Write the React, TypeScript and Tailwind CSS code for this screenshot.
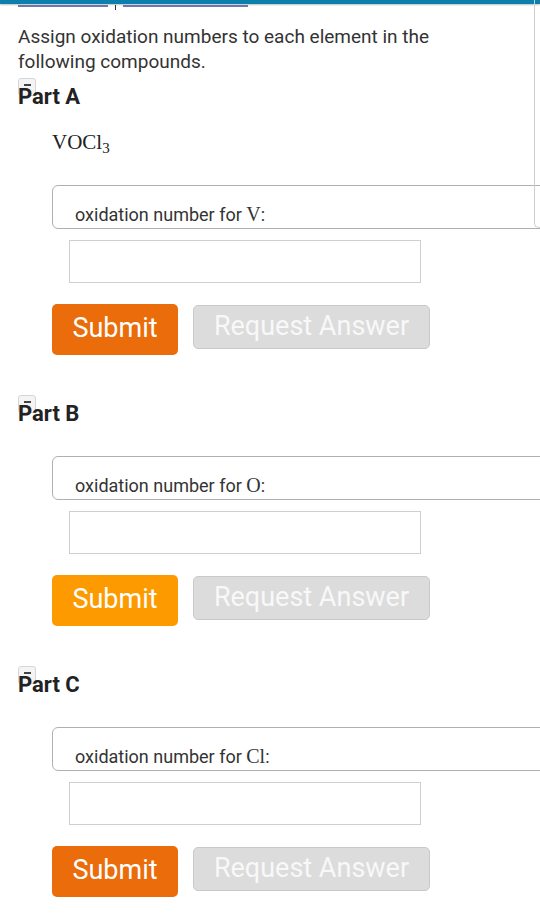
import React from 'react';

const CollapseIcon = () => (
  <span className="absolute left-0 top-[-7px] flex h-[18px] w-[18px] justify-center rounded-[3px] border border-[#d6d6d6] bg-[#f4f4f4]">
    <span className="mt-[5px] h-[2px] w-[7px] bg-[#444]" />
  </span>
);

const Part = ({ label, first }: { label: string; first?: boolean }) => (
  <h2 className={`relative ml-[18px] text-[22px] font-bold leading-[24px] text-[#222] ${first ? 'mt-[11px]' : 'mt-[47px]'}`}>
    <CollapseIcon />
    <span className="relative">{label}</span>
  </h2>
);

const Answer = ({ element, hot }: { element: string; hot?: boolean }) => (
  <>
    <div className="ml-[52px] w-[520px] rounded-[6px] border border-[#b0b0b0] pb-[3px] pl-[22px] pt-[18px] text-[18px] leading-[20px] text-[#333]">
      oxidation number for{' '}
      <span className="font-['Liberation_Serif',serif] text-[20px]">{element}</span>:
    </div>
    <div className="ml-[69px] mt-[11px] h-[43px] w-[352px] border border-[#cfcfcf] bg-white" />
    <div className="ml-[52px] mt-[21px] flex items-start gap-[15px]">
      <button
        className={`h-[51px] w-[126px] rounded-[5px] pb-[3px] text-[27px] leading-none text-white ${hot ? 'bg-[#fd9a00]' : 'bg-[#ea6c0a]'}`}
      >
        Submit
      </button>
      <button className="mt-[1px] h-[44px] w-[237px] rounded-[5px] border border-[#c9c9c9] bg-[#dcdcdc] pb-[2px] text-[27px] leading-none text-[#f8f8f8]">
        Request Answer
      </button>
    </div>
  </>
);

export default function App() {
  return (
    <div className="relative min-h-[916px] overflow-hidden bg-white font-['Roboto',sans-serif] text-[#333]">
      <div className="h-[4px] bg-[#0b80ad] shadow-[0_1px_2px_rgba(0,0,0,0.25)]" />
      <div className="flex h-[6px] items-start pl-[18px]">
        <span className="mt-[1px] h-[2px] w-[90px] bg-[#6b78ad]" />
        <span className="ml-[7px] mt-[1px] h-[5px] w-[1px] bg-[#333]" />
        <span className="ml-[7px] mt-[1px] h-[2px] w-[125px] bg-[#6b78ad]" />
      </div>
      <div className="absolute left-[534px] top-0 h-[228px] w-[20px] rounded-bl-[5px] border-b border-l border-[#cfcfcf]" />

      <p className="mt-[14px] max-w-[460px] px-[18px] text-[19px] leading-[25px] text-[#333]">
        Assign oxidation numbers to each element in the following compounds.
      </p>

      <Part label="Part A" first />
      <div className="ml-[52px] mt-[19px] font-['Liberation_Serif',serif] text-[21px] leading-[28px] text-[#222]">
        VOCl<sub className="text-[15px]">3</sub>
      </div>
      <div className="mt-[29px]" />
      <Answer element="V" />

      <Part label="Part B" />
      <div className="mt-[30px]" />
      <Answer element="O" hot />

      <Part label="Part C" />
      <div className="mt-[30px]" />
      <Answer element="Cl" />
    </div>
  );
}
